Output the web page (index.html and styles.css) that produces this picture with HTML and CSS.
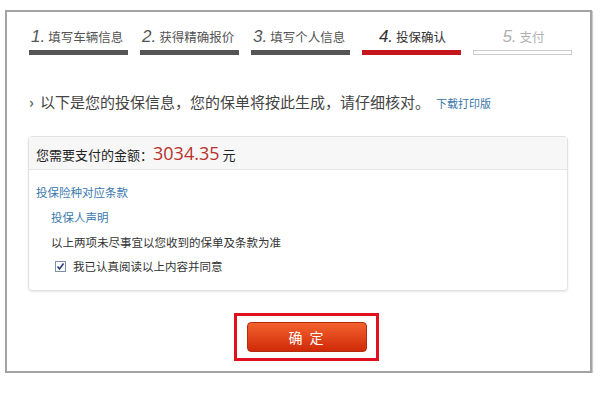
FILE: index.html
```html
<!DOCTYPE html>
<html>
<head>
    <meta charset="UTF-8">
    <title>投保确认</title>
    <link rel="stylesheet" href="styles.css">
</head>
<body>

<div class="frame">
    <!-- Шаги оформления -->
    <div class="steps">
        <div class="step done"><span class="num">1.</span>填写车辆信息<div class="bar"></div></div>
        <div class="step done"><span class="num">2.</span>获得精确报价<div class="bar"></div></div>
        <div class="step done"><span class="num">3.</span>填写个人信息<div class="bar"></div></div>
        <div class="step current"><span class="num">4.</span>投保确认<div class="bar"></div></div>
        <div class="step todo"><span class="num">5.</span>支付<div class="bar"></div></div>
    </div>

    <p class="intro"><span class="arrow">›</span>以下是您的投保信息，您的保单将按此生成，请仔细核对。<a href="#" class="print">下载打印版</a></p>

    <div class="panel">
        <div class="panel-head">您需要支付的金额：<span class="amount">3034.35</span> 元</div>
        <div class="panel-body">
            <a href="#" class="link">投保险种对应条款</a>
            <a href="#" class="link sub">投保人声明</a>
            <div class="note">以上两项未尽事宜以您收到的保单及条款为准</div>
            <label class="agree"><span class="check">
                <svg width="11" height="11" viewBox="0 0 11 11"><rect x="0.5" y="0.5" width="10" height="10" fill="#fff" stroke="#7a8fa8"/><path d="M2.5 5.5 L4.5 8 L8.5 2.5" fill="none" stroke="#2a3d7a" stroke-width="1.6"/></svg>
            </span>我已认真阅读以上内容并同意</label>
        </div>
    </div>

    <div class="actions">
        <div class="highlight"><button type="button" class="confirm">确 定</button></div>
    </div>
</div>

</body>
</html>
```

FILE: styles.css
```css
body {
    margin: 0;
    background-color: #fff;
    font-family: "Noto Sans CJK SC", "Liberation Sans", sans-serif;
    color: #333;
}
.frame {
    margin: 10px 0 0 5px;
    width: 583px;
    height: 359px;
    border: 2px solid #a3a3a3;
    box-shadow: 1px 1px 1px #ccc;
}
.steps {
    display: flex;
    gap: 12px;
    padding: 15px 0 0 22px;
}
.step {
    width: 99px;
    font-size: 12.5px;
    line-height: 20px;
    color: #555;
    white-space: nowrap;
}
.step .num {
    font-family: "Liberation Sans", sans-serif;
    font-style: italic;
    font-size: 17px;
    margin: 0 3px 0 2px;
}
.step .bar {
    height: 5px;
    margin-top: 3px;
    background-color: #555;
}
.step.current {
    color: #333;
    text-align: center;
}
.step.current .bar {
    background-color: #c4161c;
}
.step.todo {
    color: #b0b0b0;
    text-align: center;
}
.step.todo .bar {
    height: 3px;
    background-color: #fff;
    border: 1px solid #ccc;
}
.intro {
    margin: 35px 0 0 22px;
    font-size: 15px;
    line-height: 24px;
    color: #444;
}
.arrow {
    font-weight: bold;
    color: #666;
    margin-right: 6px;
}
.print {
    font-size: 11px;
    color: #3876a8;
    text-decoration: none;
    margin-left: 6px;
}
.panel {
    margin: 21px 0 0 21px;
    width: 538px;
    border: 1px solid #e2e2e2;
    border-radius: 4px;
    box-shadow: 0 1px 2px #e6e6e6;
}
.panel-head {
    height: 32px;
    line-height: 33px;
    padding-left: 7px;
    background-color: #f7f7f7;
    border-bottom: 1px solid #e6e6e6;
    font-size: 13px;
    color: #222;
}
.amount {
    font-family: "Open Sans", "Liberation Sans", sans-serif;
    font-size: 18px;
    color: #b8312c;
}
.panel-body {
    padding: 10px 0 12px 7px;
    font-size: 11.5px;
}
.link {
    display: block;
    color: #3a78ae;
    text-decoration: none;
    line-height: 25px;
}
.link.sub, .note {
    padding-left: 15px;
}
.note {
    line-height: 24px;
    color: #333;
}
.agree {
    display: flex;
    align-items: center;
    gap: 7px;
    padding-left: 19px;
    line-height: 24px;
    color: #333;
}
.check svg {
    display: block;
}
.actions {
    display: flex;
    justify-content: center;
    margin-top: 22px;
    padding-left: 16px;
}
.highlight {
    border: 3px solid #e0101e;
    padding: 6px 9px 6px 10px;
}
button {
    cursor: pointer;
}
.confirm {
    width: 120px;
    height: 30px;
    border: 1px solid #b42a0c;
    border-radius: 4px;
    background: linear-gradient(#f4622e, #cf2a08);
    color: #fff;
    font-family: "Noto Sans CJK SC", sans-serif;
    font-size: 14px;
    letter-spacing: 2px;
}
```
